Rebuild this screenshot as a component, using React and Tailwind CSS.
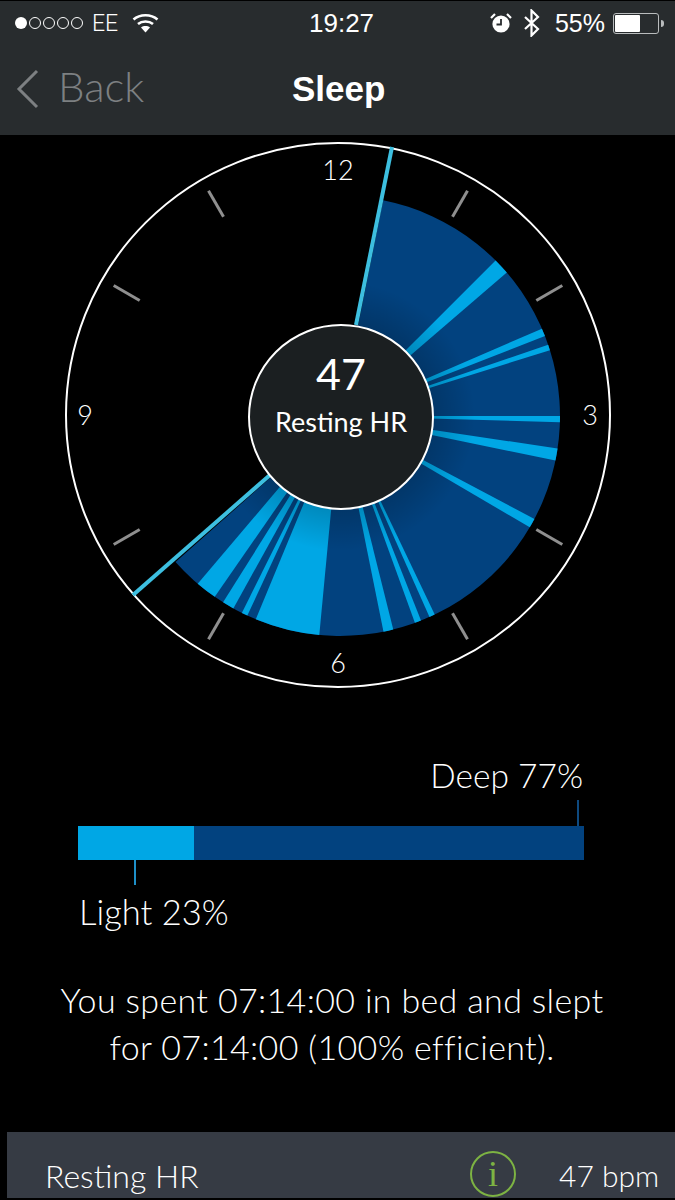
const CX = 340;
const CY = 416;

const LIGHT_BANDS = [
  [45, 49.3],
  [66.6, 68.7],
  [71.1, 72.6],
  [90, 91.6],
  [98.5, 101.7],
  [117.9, 120.4],
  [154.5, 156],
  [158.4, 160.1],
  [166, 168.6],
  [185.4, 202.5],
  [204.9, 206.5],
  [209, 212.1],
  [214.7, 220.3],
];

const HOUR_TICKS = [30, 60, 120, 150, 210, 240, 300, 330];

const polar = (cx, cy, r, deg) => {
  const a = (deg * Math.PI) / 180;
  return [cx + r * Math.sin(a), cy - r * Math.cos(a)];
};

const sector = (from, to, r) => {
  const [x1, y1] = polar(CX, CY, r, from);
  const [x2, y2] = polar(CX, CY, r, to);
  const large = to - from > 180 ? 1 : 0;
  return `M${CX} ${CY}L${x1} ${y1}A${r} ${r} 0 ${large} 1 ${x2} ${y2}Z`;
};

const StatusBar = () => (
  <div className="flex h-[44px] items-center justify-between pl-[15px] pr-[11px] text-[25px] leading-none text-white font-['Liberation_Sans',sans-serif]">
    <div className="flex items-center">
      <div className="flex gap-[2px]">
        <span className="h-[12px] w-[12px] rounded-full bg-white" />
        <span className="h-[12px] w-[12px] rounded-full border border-white" />
        <span className="h-[12px] w-[12px] rounded-full border border-white" />
        <span className="h-[12px] w-[12px] rounded-full border border-white" />
        <span className="h-[12px] w-[12px] rounded-full border border-white" />
      </div>
      <span className="ml-[9px] text-[23px] font-light font-['Roboto',sans-serif]">EE</span>
      <svg className="ml-[14px]" width="27" height="20" viewBox="0 0 27 20" fill="none" stroke="white" strokeWidth="2.6">
        <path d="M1.5 6.5C8 .8 19 .8 25.5 6.5" />
        <path d="M6 11C10 7.6 17 7.6 21 11" />
        <path d="M13.5 19.5L9 14.5C11.5 12.6 15.5 12.6 18 14.5Z" fill="white" stroke="none" />
      </svg>
    </div>
    <span className="absolute left-[309px] text-[26px]">19:27</span>
    <div className="flex items-center">
      <svg width="22" height="20" viewBox="0 0 22 20">
        <circle cx="11" cy="11" r="8.6" fill="white" />
        <path d="M11 6V11.5H6.5" fill="none" stroke="#282c2e" strokeWidth="1.8" />
        <path d="M1 5L5 1M21 5L17 1" stroke="white" strokeWidth="2.2" />
      </svg>
      <svg className="ml-[11px]" width="18" height="28" viewBox="0 0 18 28" fill="none" stroke="white" strokeWidth="2.2">
        <path d="M2 8L15 20L8.5 26.5V1.5L15 8L2 20" />
      </svg>
      <span className="ml-[14px]">55%</span>
      <div className="ml-[8px] flex h-[21px] w-[46px] rounded-[3px] border border-[#b9bcbd] p-[1px]">
        <div className="w-[25px] rounded-[1px] bg-white" />
      </div>
      <div className="ml-[2px] h-[7px] w-[3px] rounded-r-full bg-[#b9bcbd]" />
    </div>
  </div>
);

const NavBar = () => (
  <div className="relative flex h-[90px] items-start pl-[16px] pt-[24px]">
    <svg width="24" height="40" viewBox="0 0 24 40" fill="none" stroke="#7d8082" strokeWidth="3">
      <path d="M21 2L3 20L21 38" />
    </svg>
    <span className="ml-[18px] -mt-[5px] text-[42px] font-light leading-[44px] text-[#7d8082]">Back</span>
    <span className="absolute left-[292px] top-[23px] text-[35px] font-bold leading-[42px] text-white font-['Liberation_Sans',sans-serif]">
      Sleep
    </span>
  </div>
);

const SleepDial = () => (
  <div className="relative h-[565px]">
    <svg width="675" height="565" viewBox="0 135 675 565" className="block">
      <defs>
        <radialGradient id="hub" gradientUnits="userSpaceOnUse" cx={CX} cy={CY} r="135">
          <stop offset="0.65" stopColor="#000" stopOpacity="0.2" />
          <stop offset="1" stopColor="#000" stopOpacity="0" />
        </radialGradient>
      </defs>
      <circle cx="338" cy="415" r="272" fill="none" stroke="white" strokeWidth="2" />
      {HOUR_TICKS.map((deg) => {
        const [x1, y1] = polar(338, 415, 229, deg);
        const [x2, y2] = polar(338, 415, 259, deg);
        return <line key={deg} x1={x1} y1={y1} x2={x2} y2={y2} stroke="#8f8f8f" strokeWidth="3" />;
      })}
      <path d={sector(11.3, 228.4, 220)} fill="#02427f" />
      {LIGHT_BANDS.map(([from, to]) => (
        <path key={from} d={sector(from, to, 220)} fill="#00a7e5" />
      ))}
      <path d={sector(11.3, 228.4, 135)} fill="url(#hub)" />
      <line x1="392" y1="147" x2="356" y2="325" stroke="#3dbfe0" strokeWidth="4" />
      <line x1="133" y1="595" x2="270" y2="475" stroke="#3dbfe0" strokeWidth="4" />
      <g fill="white" fontSize="27" fontWeight="300" textAnchor="middle" fontFamily="Lato, sans-serif">
        <text x="338" y="180">12</text>
        <text x="590" y="425">3</text>
        <text x="338" y="673">6</text>
        <text x="85" y="425">9</text>
      </g>
    </svg>
    <div className="absolute left-[248px] top-[189px] flex h-[186px] w-[186px] flex-col items-center rounded-full border-2 border-white bg-[#1b1f21] text-white">
      <span className="mt-[22px] text-[43px] leading-[52px]">47</span>
      <span className="mt-[7px] text-[27px] leading-[30px]">Resting HR</span>
    </div>
  </div>
);

const SplitBar = () => (
  <div className="mx-[78px] w-[506px]">
    <div className="pr-[1px] text-right text-[33.5px] font-light leading-[40px] text-white">Deep 77%</div>
    <div className="ml-[499px] mt-[5px] h-[26px] w-[2px] bg-[#0e4a80]" />
    <div className="flex h-[34px] bg-[#02427f]">
      <div className="w-[116px] bg-[#00a7e5]" />
    </div>
    <div className="ml-[56px] h-[25px] w-[2px] bg-[#1e8fc7]" />
    <div className="ml-[1px] mt-[7px] text-[34.5px] font-light leading-[40px] text-white">Light 23%</div>
  </div>
);

const App = () => (
  <div className="flex h-[1200px] w-[675px] flex-col overflow-hidden bg-black font-['Lato',sans-serif]">
    <header className="mt-[1px] h-[134px] bg-[#282c2e]">
      <StatusBar />
      <NavBar />
    </header>
    <SleepDial />
    <main className="mt-[55px]">
      <SplitBar />
      <p className="mt-[44px] pr-[11px] text-center text-[34px] font-light leading-[47px] tracking-[0.35px] text-white">
        You spent 07:14:00 in bed and slept
        <br />
        for 07:14:00 (100% efficient).
      </p>
    </main>
    <section className="ml-[7px] mt-[62px] flex h-[66px] shrink-0 items-end bg-[#363b44] pb-[1px] pl-[38px] text-white">
      <span className="mb-[2px] w-[425px] text-[32px] font-light leading-[39px]">Resting HR</span>
      <div className="flex h-[46px] w-[46px] items-center justify-center rounded-full border-2 border-[#7db343] font-['Liberation_Serif',serif] text-[36px] leading-none text-[#7db343]">
        i
      </div>
      <span className="mb-[2px] ml-[43px] text-[30px] font-light leading-[39px]">47 bpm</span>
    </section>
  </div>
);

export default App;
